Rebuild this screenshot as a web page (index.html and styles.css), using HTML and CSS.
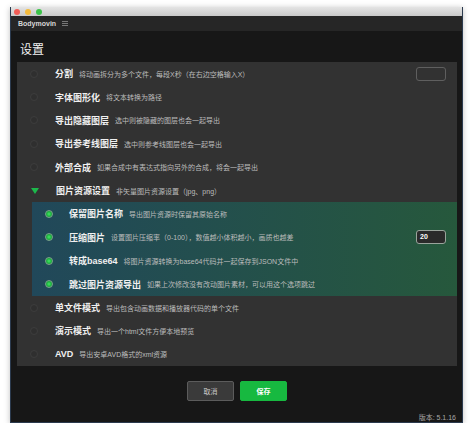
FILE: index.html
```html
<!DOCTYPE html>
<html lang="zh">
<head>
    <meta charset="UTF-8">
    <title>Bodymovin 设置</title>
    <link rel="stylesheet" href="styles.css">
</head>
<body>
    <div class="window">
        <div class="titlebar">
            <span class="light red"></span>
            <span class="light yellow"></span>
            <span class="light green"></span>
        </div>
        <div class="appbar">
            Bodymovin
            <svg class="menu-icon" width="6" height="5" viewBox="0 0 6 5">
                <rect x="0" y="0" width="6" height="1" fill="#777"/>
                <rect x="0" y="2" width="6" height="1" fill="#777"/>
                <rect x="0" y="4" width="6" height="1" fill="#777"/>
            </svg>
        </div>
        <div class="content">
            <div class="page-title">设置</div>
            <div class="panel">
                <div class="row">
                    <span class="radio"></span>
                    <span class="label">分割</span>
                    <span class="desc">将动画拆分为多个文件，每段X秒（在右边空格输入X）</span>
                    <span class="field"></span>
                </div>
                <div class="row">
                    <span class="radio"></span>
                    <span class="label">字体图形化</span>
                    <span class="desc">将文本转换为路径</span>
                </div>
                <div class="row">
                    <span class="radio"></span>
                    <span class="label">导出隐藏图层</span>
                    <span class="desc">选中则被隐藏的图层也会一起导出</span>
                </div>
                <div class="row">
                    <span class="radio"></span>
                    <span class="label">导出参考线图层</span>
                    <span class="desc">选中则参考线图层也会一起导出</span>
                </div>
                <div class="row">
                    <span class="radio"></span>
                    <span class="label">外部合成</span>
                    <span class="desc">如果合成中有表达式指向另外的合成，将会一起导出</span>
                </div>
                <div class="row">
                    <span class="arrow"></span>
                    <span class="label">图片资源设置</span>
                    <span class="desc">非矢量图片资源设置（jpg、png）</span>
                </div>
                <div class="group">
                    <div class="row sub">
                        <span class="radio on"></span>
                        <span class="label">保留图片名称</span>
                        <span class="desc">导出图片资源时保留其原始名称</span>
                    </div>
                    <div class="row sub">
                        <span class="radio on"></span>
                        <span class="label">压缩图片</span>
                        <span class="desc">设置图片压缩率（0-100），数值越小体积越小，画质也越差</span>
                        <span class="field filled">20</span>
                    </div>
                    <div class="row sub">
                        <span class="radio on"></span>
                        <span class="label">转成base64</span>
                        <span class="desc">将图片资源转换为base64代码并一起保存到JSON文件中</span>
                    </div>
                    <div class="row sub">
                        <span class="radio on"></span>
                        <span class="label">跳过图片资源导出</span>
                        <span class="desc">如果上次修改没有改动图片素材，可以用这个选项跳过</span>
                    </div>
                </div>
                <div class="row">
                    <span class="radio"></span>
                    <span class="label">单文件模式</span>
                    <span class="desc">导出包含动画数据和播放器代码的单个文件</span>
                </div>
                <div class="row">
                    <span class="radio"></span>
                    <span class="label">演示模式</span>
                    <span class="desc">导出一个html文件方便本地预览</span>
                </div>
                <div class="row">
                    <span class="radio"></span>
                    <span class="label">AVD</span>
                    <span class="desc">导出安卓AVD格式的xml资源</span>
                </div>
            </div>
            <div class="footer">
                <div class="buttons">
                    <button class="btn cancel">取消</button>
                    <button class="btn save">保存</button>
                </div>
                <div class="version">版本: 5.1.16</div>
            </div>
        </div>
    </div>
</body>
</html>
```

FILE: styles.css
```css
body {
    margin: 0;
    background: #ffffff;
    font-family: "Liberation Sans", "Noto Sans CJK SC", sans-serif;
}
.window {
    margin: 7px 0 0 10px;
    width: 453px;
    height: 416px;
    display: flex;
    flex-direction: column;
    box-shadow: 0 1px 6px rgba(0, 0, 0, 0.25);
    border: 1px solid #2b3a4e;
    border-top: none;
    box-sizing: border-box;
}
.titlebar {
    height: 10px;
    background: linear-gradient(#e4e4e4, #c9c9c9);
    display: flex;
    align-items: center;
    padding-left: 3px;
    gap: 5px;
}
.light {
    width: 6px;
    height: 6px;
    border-radius: 50%;
}
.red { background: #f25d56; }
.yellow { background: #f5bb3c; }
.green { background: #3cc34a; }
.appbar {
    height: 16px;
    background: #262626;
    color: #d6d6d6;
    font-size: 7px;
    font-weight: bold;
    display: flex;
    align-items: center;
    padding-left: 7px;
}
.menu-icon {
    margin-left: 6px;
}
.content {
    flex: 1;
    background: #171717;
    padding: 0 5px 0 6px;
    display: flex;
    flex-direction: column;
}
.page-title {
    height: 31px;
    box-sizing: border-box;
    padding: 12px 0 0 3px;
    font-size: 12px;
    line-height: 14px;
    color: #f2f2f2;
}
.panel {
    background: #323232;
}
.row {
    height: 23.4px;
    display: flex;
    align-items: center;
    padding-left: 13px;
}
.radio {
    width: 8px;
    height: 8px;
    border-radius: 50%;
    background: #2f2f2f;
    border: 1px solid #3d3d3d;
    box-sizing: border-box;
    flex-shrink: 0;
}
.radio.on {
    background: radial-gradient(circle, #4be36a 0, #1fc043 45%, #1a9a3c 70%);
    border: 1px solid #7aa58a;
}
.arrow {
    width: 0;
    height: 0;
    border-left: 4px solid transparent;
    border-right: 4px solid transparent;
    border-top: 6px solid #1cb84b;
    margin-left: 1px;
}
.label {
    margin-left: 17px;
    font-size: 9px;
    font-weight: bold;
    color: #f0f0f0;
    white-space: nowrap;
}
.desc {
    margin-left: 6px;
    font-size: 7px;
    color: #bcbcbc;
    white-space: nowrap;
}
.group {
    margin-left: 15px;
    background: linear-gradient(to right, #21485a, #26583c);
}
.row.sub .label {
    margin-left: 16px;
}
.field {
    margin-left: auto;
    margin-right: 11px;
    width: 30px;
    height: 14px;
    box-sizing: border-box;
    border: 1px solid #5f5f5f;
    border-radius: 3px;
    flex-shrink: 0;
}
.field.filled {
    background: #2a2a2a;
    border-color: #9aa49c;
    color: #ffffff;
    font-size: 7px;
    font-weight: bold;
    line-height: 12px;
    padding-left: 3px;
}
.footer {
    flex: 1;
    display: flex;
    flex-direction: column;
}
.buttons {
    margin-top: 15px;
    display: flex;
    justify-content: center;
    gap: 6px;
}
.btn {
    width: 47px;
    height: 20px;
    font-family: inherit;
    font-size: 7px;
    border-radius: 2px;
    padding: 0;
}
.cancel {
    background: #3a3a3a;
    border: 1px solid #5c5c5c;
    color: #c8c8c8;
}
.save {
    background: #17b940;
    border: 1px solid #17b940;
    color: #ffffff;
    font-weight: bold;
}
.version {
    margin-top: 11px;
    text-align: right;
    font-size: 7px;
    color: #a8a8a8;
    padding-right: 1px;
}
```
